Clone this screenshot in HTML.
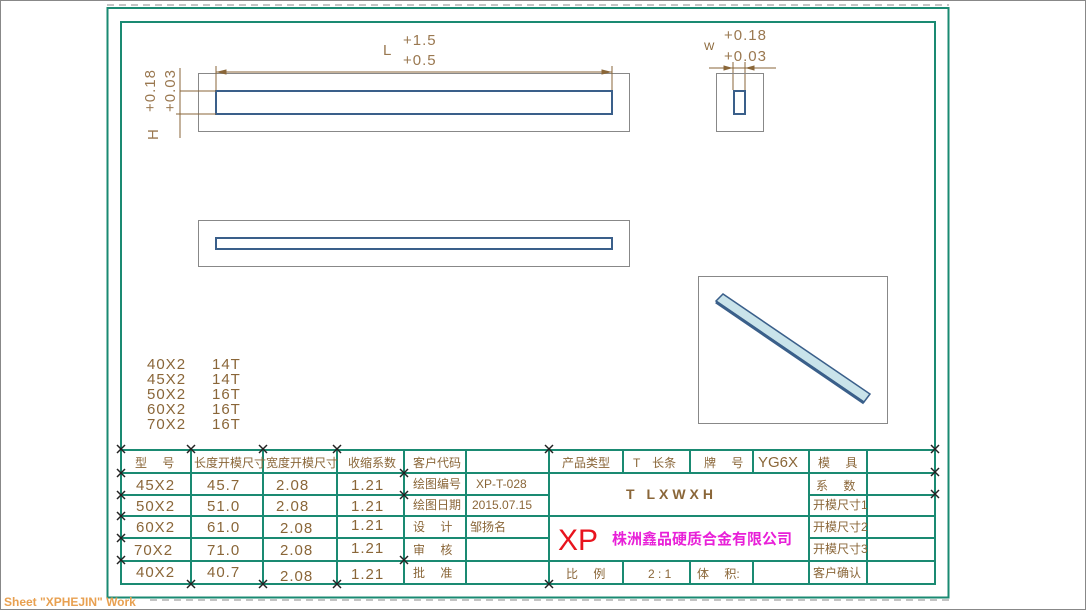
<!DOCTYPE html>
<html><head><meta charset="utf-8"><style>
html,body{margin:0;padding:0;background:#fff}
svg{display:block}
text{font-family:"Liberation Sans","Noto Sans CJK SC",sans-serif;fill:#8a6638}
.c{font-size:12px}
.n{font-size:15px;letter-spacing:1px;fill:#9a7850}
</style></head><body>
<svg width="1086" height="610" viewBox="0 0 1086 610" xmlns="http://www.w3.org/2000/svg">
<rect x="0.5" y="0.5" width="1085" height="609" fill="#fff" stroke="#888"/>
<line x1="107" y1="5" x2="949" y2="5" stroke="#888" stroke-dasharray="7,5"/>
<line x1="150" y1="600" x2="949" y2="600" stroke="#888" stroke-dasharray="7,5"/>
<rect x="107.5" y="8" width="841" height="589.5" fill="none" stroke="#1a8a72" stroke-width="2"/>
<rect x="121" y="22" width="814" height="562" fill="none" stroke="#1a8a72" stroke-width="2"/>

<rect x="198.5" y="73.5" width="431" height="58" fill="none" stroke="#888"/>
<rect x="216" y="91" width="396" height="23" fill="none" stroke="#3a5f8a" stroke-width="2"/>
<g stroke="#8a6638" fill="#8a6638">
<line x1="216" y1="72" x2="612" y2="72"/>
<line x1="216" y1="66" x2="216" y2="90"/><line x1="612" y1="66" x2="612" y2="90"/>
<polygon points="218,72 226,70 226,74"/><polygon points="610,72 602,70 602,74"/>
<line x1="180" y1="91" x2="216" y2="91"/><line x1="176" y1="114" x2="216" y2="114"/>
<line x1="180" y1="68" x2="180" y2="138"/>
<line x1="733" y1="62" x2="733" y2="90"/><line x1="745" y1="62" x2="745" y2="90"/>
<line x1="709" y1="68" x2="776" y2="68"/>
<polygon points="731,68 724,66 724,70"/><polygon points="747,68 754,66 754,70"/>
</g>
<text x="383" y="55" class="n">L</text>
<text x="403" y="45" class="n">+1.5</text>
<text x="403" y="65" class="n">+0.5</text>
<text transform="translate(158,140) rotate(-90)" class="n">H</text>
<text transform="translate(155,112) rotate(-90)" class="n">+0.18</text>
<text transform="translate(175,112) rotate(-90)" class="n">+0.03</text>
<rect x="716.5" y="73.5" width="47" height="58" fill="none" stroke="#888"/>
<rect x="734" y="91" width="11" height="23" fill="none" stroke="#3a5f8a" stroke-width="2"/>
<text x="704" y="50" style="font-size:11px">W</text>
<text x="724" y="40" class="n">+0.18</text>
<text x="724" y="61" class="n">+0.03</text>

<rect x="198.5" y="220.5" width="431" height="46" fill="none" stroke="#888"/>
<rect x="216" y="238" width="396" height="11" fill="none" stroke="#3a5f8a" stroke-width="2"/>

<rect x="698.5" y="276.5" width="189" height="147" fill="none" stroke="#888"/>
<polygon points="716,301 723,294 870,394 864,402" fill="#c9e3ea" stroke="#3a5f8a" stroke-width="1.5"/>
<line x1="716" y1="302" x2="864" y2="403" stroke="#3a5f8a" stroke-width="3"/>

<g class="n">
<text x="147" y="369">40X2</text><text x="212" y="369">14T</text>
<text x="147" y="384">45X2</text><text x="212" y="384">14T</text>
<text x="147" y="399">50X2</text><text x="212" y="399">16T</text>
<text x="147" y="414">60X2</text><text x="212" y="414">16T</text>
<text x="147" y="429">70X2</text><text x="212" y="429">16T</text>
</g>

<g stroke="#1a8a72" stroke-width="2" fill="none">
<line x1="121" y1="450" x2="935" y2="450"/>
<line x1="121" y1="473" x2="935" y2="473"/>
<line x1="121" y1="495" x2="549" y2="495"/>
<line x1="809" y1="495" x2="935" y2="495"/>
<line x1="121" y1="516" x2="935" y2="516"/>
<line x1="121" y1="538" x2="549" y2="538"/>
<line x1="809" y1="538" x2="935" y2="538"/>
<line x1="121" y1="561" x2="935" y2="561"/>
<line x1="121" y1="584" x2="935" y2="584"/>
<line x1="191" y1="450" x2="191" y2="584"/>
<line x1="263" y1="450" x2="263" y2="584"/>
<line x1="337" y1="450" x2="337" y2="584"/>
<line x1="404" y1="450" x2="404" y2="584"/>
<line x1="466" y1="450" x2="466" y2="584"/>
<line x1="549" y1="450" x2="549" y2="584"/>
<line x1="623" y1="450" x2="623" y2="473"/><line x1="623" y1="561" x2="623" y2="584"/>
<line x1="690" y1="450" x2="690" y2="473"/><line x1="690" y1="561" x2="690" y2="584"/>
<line x1="753" y1="450" x2="753" y2="473"/><line x1="753" y1="561" x2="753" y2="584"/>
<line x1="809" y1="450" x2="809" y2="584"/>
<line x1="867" y1="450" x2="867" y2="584"/>
<line x1="935" y1="450" x2="935" y2="584"/>
</g>
<g stroke="#222" stroke-width="1.5">
<path d="M117 445l8 8M125 445l-8 8M187 445l8 8M195 445l-8 8M259 445l8 8M267 445l-8 8M333 445l8 8M341 445l-8 8M545 445l8 8M553 445l-8 8M931 445l8 8M939 445l-8 8M931 468l8 8M939 468l-8 8M931 490l8 8M939 490l-8 8M117 469l8 8M125 469l-8 8M117 491l8 8M125 491l-8 8M117 512l8 8M125 512l-8 8M117 534l8 8M125 534l-8 8M117 556l8 8M125 556l-8 8M400 469l8 8M408 469l-8 8M400 491l8 8M408 491l-8 8M400 556l8 8M408 556l-8 8M187 580l8 8M195 580l-8 8M259 580l8 8M267 580l-8 8M333 580l8 8M341 580l-8 8M545 580l8 8M553 580l-8 8"/>
</g>
<g class="c">
<text x="135" y="467">型　 号</text><text x="194" y="467">长度开模尺寸</text><text x="266" y="467">宽度开模尺寸</text><text x="348" y="467">收缩系数</text>
<text x="413" y="467">客户代码</text><text x="413" y="488">绘图编号</text><text x="413" y="509">绘图日期</text>
<text x="413" y="531">设　 计</text><text x="413" y="554">审　 核</text><text x="413" y="577">批　 准</text>
<text x="472" y="509">2015.07.15</text><text x="476" y="488">XP-T-028</text><text x="470" y="531">邹扬名</text>
<text x="562" y="467">产品类型</text><text x="633" y="467">T　长条</text><text x="704" y="467">牌　 号</text>
<text x="818" y="467">模　 具</text><text x="816" y="490">系　 数</text><text x="813" y="509">开模尺寸1</text>
<text x="813" y="531">开模尺寸2</text><text x="813" y="553">开模尺寸3</text><text x="813" y="577">客户确认</text>
<text x="566" y="578">比　 例</text><text x="648" y="578">2 : 1</text><text x="697" y="578">体　 积:</text>
</g>
<text x="758" y="467" style="font-size:15px">YG6X</text>
<g class="n">
<text x="136" y="490">45X2</text><text x="207" y="490">45.7</text><text x="276" y="490">2.08</text><text x="351" y="490">1.21</text>
<text x="136" y="511">50X2</text><text x="207" y="511">51.0</text><text x="276" y="511">2.08</text><text x="351" y="511">1.21</text>
<text x="136" y="532">60X2</text><text x="207" y="532">61.0</text><text x="280" y="533">2.08</text><text x="351" y="530">1.21</text>
<text x="134" y="555">70X2</text><text x="207" y="555">71.0</text><text x="280" y="555">2.08</text><text x="351" y="553">1.21</text>
<text x="136" y="577">40X2</text><text x="207" y="577">40.7</text><text x="280" y="581">2.08</text><text x="351" y="579">1.21</text>
</g>
<text x="626" y="499" style="font-size:14px;font-weight:bold;letter-spacing:4px">T  LXWXH</text>
<text x="558" y="550" style="font-size:30px;fill:#e8141e">XP</text>
<text x="612" y="544" style="font-size:15px;font-weight:bold;fill:#e820d8">株洲鑫品硬质合金有限公司</text>
<text x="4" y="606" style="font-size:12px;font-weight:bold;fill:#e8a050">Sheet "XPHEJIN" Work</text>
</svg>
</body></html>
